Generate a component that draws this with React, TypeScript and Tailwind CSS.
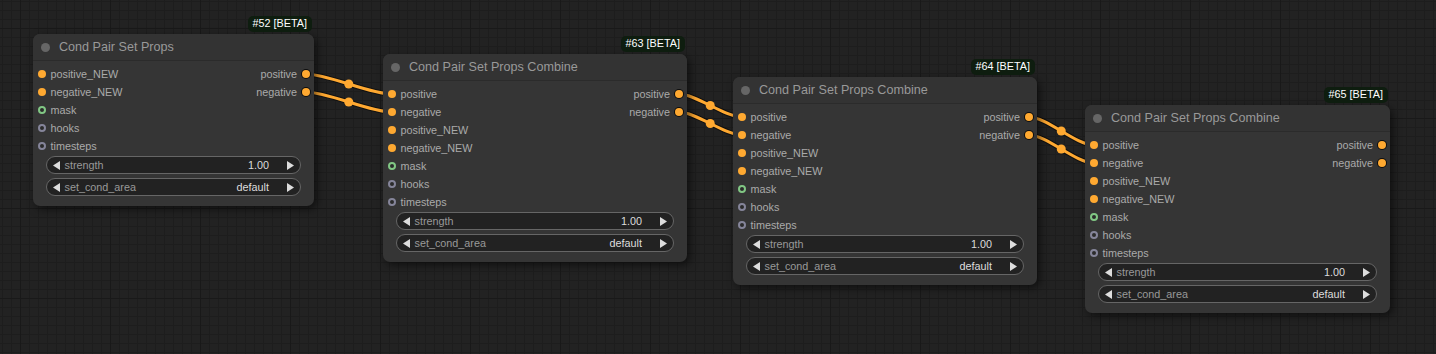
type Kind = "cond" | "mask" | "hook";
type Slot = { name: string; kind: Kind };

const combineInputs: Slot[] = [
  { name: "positive", kind: "cond" },
  { name: "negative", kind: "cond" },
  { name: "positive_NEW", kind: "cond" },
  { name: "negative_NEW", kind: "cond" },
  { name: "mask", kind: "mask" },
  { name: "hooks", kind: "hook" },
  { name: "timesteps", kind: "hook" },
];

const setInputs: Slot[] = [
  { name: "positive_NEW", kind: "cond" },
  { name: "negative_NEW", kind: "cond" },
  { name: "mask", kind: "mask" },
  { name: "hooks", kind: "hook" },
  { name: "timesteps", kind: "hook" },
];

const outputs = ["positive", "negative"];

// endpoints of the links, in canvas pixels
const links: [number, number, number, number][] = [
  [306, 74, 391.5, 94],
  [306, 92, 391.5, 112],
  [679, 94, 741.5, 117],
  [679, 112, 741.5, 135],
  [1029, 117, 1093.5, 145],
  [1029, 135, 1093.5, 163],
];

function linkPath([x1, y1, x2, y2]: [number, number, number, number]) {
  const d = Math.hypot(x2 - x1, y2 - y1) * 0.25;
  const c1 = x1 + d;
  const c2 = x2 - d;
  const mx = (x1 + 3 * c1 + 3 * c2 + x2) / 8;
  const my = (y1 + 3 * y1 + 3 * y2 + y2) / 8;
  return { d: `M${x1} ${y1} C${c1} ${y1} ${c2} ${y2} ${x2} ${y2}`, mx, my };
}

function Dot({ kind, out = false }: { kind: Kind; out?: boolean }) {
  if (kind === "mask")
    return <span className="block w-[8px] h-[8px] rounded-full border-[2.5px] border-[#81C784] bg-[#2b2b2b]" />;
  if (kind === "hook")
    return <span className="block w-[8px] h-[8px] rounded-full border-[2.5px] border-[#85859a] bg-[#2b2b2b]" />;
  return (
    <span
      className={`block w-[8px] h-[8px] rounded-full bg-[#FFA931] ${out ? "shadow-[0_0_0_1px_rgba(0,0,0,0.75)]" : ""}`}
    />
  );
}

function Arrow({ dir }: { dir: "l" | "r" }) {
  return (
    <svg width="7" height="9" viewBox="0 0 7 9" className="shrink-0">
      <polygon points={dir === "l" ? "7,0 7,9 0,4.5" : "0,0 0,9 7,4.5"} fill="#dddddd" />
    </svg>
  );
}

function Widget({ label, value }: { label: string; value: string }) {
  return (
    <div className="mx-[13px] h-[18px] flex items-center rounded-full border border-[#666] bg-[#222] pl-[6px] pr-[6px] text-[10.8px] leading-none">
      <Arrow dir="l" />
      <span className="ml-[4.5px] text-[#999]">{label}</span>
      <span className="ml-auto text-[#ddd]">{value}</span>
      <span className="ml-[18px]">
        <Arrow dir="r" />
      </span>
    </div>
  );
}

function Node({
  id,
  title,
  inputs,
  pos,
}: {
  id: number;
  title: string;
  inputs: Slot[];
  pos: string;
}) {
  return (
    <div
      className={`absolute ${pos} rounded-[7px] bg-[#353535] shadow-[3px_3px_8px_rgba(0,0,0,0.55)] pb-[10px]`}
    >
      <div className="absolute bottom-[calc(100%+2px)] right-[2px] h-[16.5px] px-[5px] flex items-center rounded-[5px] bg-[#0e1d0f] text-white text-[10.8px] leading-none">
        #{id} [BETA]
      </div>
      <div className="h-[27px] flex items-center gap-[9px] pl-[8px] rounded-t-[7px] bg-[#333] border-b border-[#2b2b2b]">
        <span className="w-[9px] h-[9px] rounded-full bg-[#666]" />
        <span className="text-[12.6px] text-[#999] leading-none">{title}</span>
      </div>
      <div className="pt-[4px]">
        {inputs.map((s, i) => (
          <div key={s.name} className="h-[18px] flex items-center text-[10.8px] leading-none text-[#aaa]">
            <div className="flex items-center gap-[5px] pl-[4.5px]">
              <Dot kind={s.kind} />
              <span>{s.name}</span>
            </div>
            {outputs[i] && (
              <div className="ml-auto flex items-center gap-[5px] pr-[4px]">
                <span>{outputs[i]}</span>
                <Dot kind="cond" out />
              </div>
            )}
          </div>
        ))}
      </div>
      <div className="mt-[1px] flex flex-col gap-[4px]">
        <Widget label="strength" value="1.00" />
        <Widget label="set_cond_area" value="default" />
      </div>
    </div>
  );
}

export default function App() {
  return (
    <div className="relative w-[1436px] h-[354px] overflow-hidden bg-[#222222] font-['Liberation_Sans',Arial,sans-serif] [background-image:linear-gradient(90deg,#191919_1px,transparent_1px),linear-gradient(#191919_1px,transparent_1px),linear-gradient(90deg,#1d1d1d_1px,transparent_1px),linear-gradient(#1d1d1d_1px,transparent_1px)] [background-size:90px_90px,90px_90px,9px_9px,9px_9px] [background-position:20px_28px,20px_28px,20px_28px,20px_28px]">
      <svg className="absolute inset-0" width="1436" height="354">
        {links.map((l, i) => {
          const p = linkPath(l);
          return (
            <g key={i}>
              <path d={p.d} fill="none" stroke="rgba(0,0,0,0.5)" strokeWidth="5" />
              <path d={p.d} fill="none" stroke="#FFA931" strokeWidth="3" />
              <circle cx={p.mx} cy={p.my} r="4.5" fill="#FFA931" />
            </g>
          );
        })}
      </svg>
      <Node id={52} title="Cond Pair Set Props" inputs={setInputs} pos="left-[33px] top-[34px] w-[281px]" />
      <Node id={63} title="Cond Pair Set Props Combine" inputs={combineInputs} pos="left-[383px] top-[54px] w-[304px]" />
      <Node id={64} title="Cond Pair Set Props Combine" inputs={combineInputs} pos="left-[733px] top-[77px] w-[304px]" />
      <Node id={65} title="Cond Pair Set Props Combine" inputs={combineInputs} pos="left-[1085px] top-[105px] w-[305px]" />
    </div>
  );
}
